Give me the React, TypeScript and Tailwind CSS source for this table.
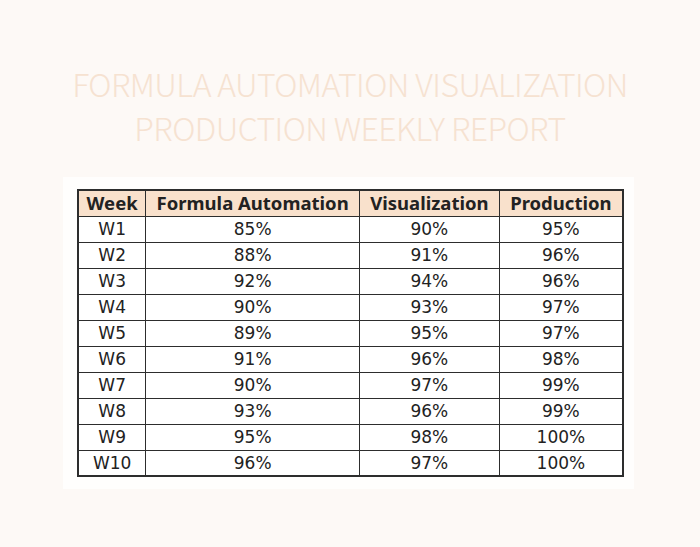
const rows = [
  ['W1', '85%', '90%', '95%'],
  ['W2', '88%', '91%', '96%'],
  ['W3', '92%', '94%', '96%'],
  ['W4', '90%', '93%', '97%'],
  ['W5', '89%', '95%', '97%'],
  ['W6', '91%', '96%', '98%'],
  ['W7', '90%', '97%', '99%'],
  ['W8', '93%', '96%', '99%'],
  ['W9', '95%', '98%', '100%'],
  ['W10', '96%', '97%', '100%'],
];

const headers = ['Week', 'Formula Automation', 'Visualization', 'Production'];

export default function App() {
  return (
    <div className="w-[700px] h-[547px] bg-[#fdf9f6] flex flex-col overflow-hidden">
      {/* title */}
      <div className="w-full pt-[61px] h-[177px] text-center text-[#f6e2d1] text-[32px] leading-[44px] font-light tracking-[-0.6px] [font-family:'Noto_Sans_CJK_SC','Noto_Sans',sans-serif]">
        <div>FORMULA AUTOMATION VISUALIZATION</div>
        <div>PRODUCTION WEEKLY REPORT</div>
      </div>

      <div className="ml-[63px] w-[571px] bg-[#fffefd] pl-[14px] pt-[12px] pb-[12px]">
        <table className="border-collapse border-2 border-[#2d2d2d] text-[#222] w-[547px]">
          <thead>
            <tr className="bg-[#f9e1cc] h-[26px]">
              {headers.map((h, i) => (
                <th
                  key={h}
                  className={
                    'border border-[#2d2d2d] p-0 text-[18.5px] leading-[24px] font-bold [font-family:"Noto_Sans",sans-serif] ' +
                    (i === 0 ? 'w-[68px]' : i === 1 ? 'w-[215px]' : i === 2 ? 'w-[140px]' : 'w-[124px]')
                  }
                >
                  {h}
                </th>
              ))}
            </tr>
          </thead>
          <tbody>
            {rows.map((r) => (
              <tr key={r[0]} className="h-[26px] bg-white">
                {r.map((c, i) => (
                  <td
                    key={i}
                    className="border border-[#2d2d2d] p-0 text-center text-[17px] leading-[24px] [font-family:'DejaVu_Sans',sans-serif]"
                  >
                    {c}
                  </td>
                ))}
              </tr>
            ))}
          </tbody>
        </table>
      </div>
    </div>
  );
}
